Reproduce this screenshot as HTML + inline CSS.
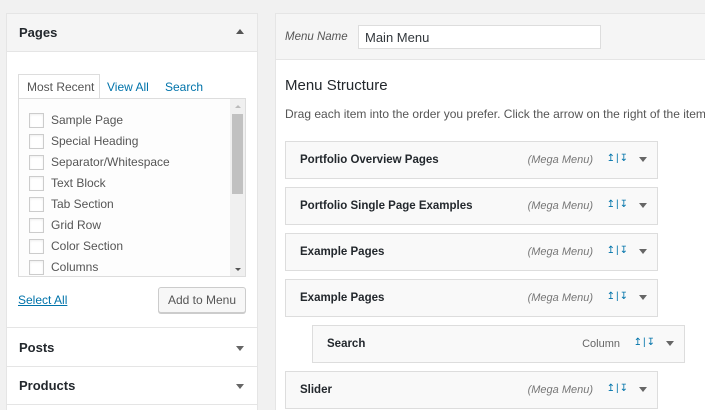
<!DOCTYPE html>
<html><head><style>
*{box-sizing:border-box;margin:0;padding:0}
html,body{width:705px;height:410px;overflow:hidden}
body{background:#f1f1f1;font-family:"Liberation Sans",sans-serif;font-size:13px;color:#444;position:relative}
.abs{position:absolute}
.lp{left:6px;top:13px;width:252px;height:397px;background:#fff;border:1px solid #e5e5e5;border-bottom:none}
.hdr{left:0;top:0;width:250px;height:38px;background:#f5f5f5;border-bottom:1px solid #e5e5e5}
.ttl{font-weight:bold;font-size:13px;color:#23282d}
.tri-u{width:0;height:0;border-left:4px solid transparent;border-right:4px solid transparent;border-bottom:5px solid #555}
.tri-d{width:0;height:0;border-left:4px solid transparent;border-right:4px solid transparent;border-top:5px solid #666}
.cb{width:15px;height:15px;border:1px solid #ccc;background:#fff;box-shadow:inset 0 1px 2px rgba(0,0,0,.07)}
.it{left:285px;width:373px;height:38px;background:#f9f9f9;border:1px solid #ddd}
.it b{position:absolute;left:14px;top:12px;font-size:11.5px;color:#23282d}
.it i{position:absolute;right:64px;top:12px;font-size:11px;color:#777}
.arr{position:absolute;right:28px;top:11px;font-size:10px;color:#0073aa;letter-spacing:1px}
.it .tri-d{position:absolute;right:10px;top:15px}
</style></head><body>
<div class="abs lp">
 <div class="abs hdr"><span class="abs ttl" style="left:12px;top:11px">Pages</span><div class="abs tri-u" style="left:229px;top:15px"></div></div>
 <div class="abs" style="left:11px;top:60px;width:82px;height:25px;border:1px solid #ddd;border-bottom:none;background:#fff"></div>
 <span class="abs" style="left:20px;top:66px;font-size:12px;color:#555">Most Recent</span>
 <span class="abs" style="left:100px;top:66px;font-size:12px;color:#0073aa">View All</span>
 <span class="abs" style="left:158px;top:66px;font-size:12px;color:#0073aa">Search</span>
 <div class="abs" style="left:11px;top:84px;width:228px;height:179px;border:1px solid #ddd;background:#fdfdfd;overflow:hidden">
  <div class="abs" style="right:0;top:0;width:15px;height:177px;background:#f0f0f0"></div>
  <div class="abs" style="right:2px;top:15px;width:11px;height:80px;background:#c1c1c1"></div>
  <div class="abs" style="right:4px;top:6px;width:0;height:0;border-left:3px solid transparent;border-right:3px solid transparent;border-bottom:3px solid #bbb"></div>
  <div class="abs" style="right:4px;top:169px;width:0;height:0;border-left:3px solid transparent;border-right:3px solid transparent;border-top:3px solid #555"></div>
 </div>
 <div class="abs" style="left:22px;top:96px;line-height:21px;font-size:12px;color:#555">
  <div style="display:flex;align-items:center;gap:7px"><span class="cb"></span>Sample Page</div>
  <div style="display:flex;align-items:center;gap:7px"><span class="cb"></span>Special Heading</div>
  <div style="display:flex;align-items:center;gap:7px"><span class="cb"></span>Separator/Whitespace</div>
  <div style="display:flex;align-items:center;gap:7px"><span class="cb"></span>Text Block</div>
  <div style="display:flex;align-items:center;gap:7px"><span class="cb"></span>Tab Section</div>
  <div style="display:flex;align-items:center;gap:7px"><span class="cb"></span>Grid Row</div>
  <div style="display:flex;align-items:center;gap:7px"><span class="cb"></span>Color Section</div>
  <div style="display:flex;align-items:center;gap:7px"><span class="cb"></span>Columns</div>
 </div>
 <span class="abs" style="left:11px;top:279px;font-size:12px;color:#0073aa;text-decoration:underline">Select All</span>
 <div class="abs" style="left:151px;top:273px;width:88px;height:26px;border:1px solid #ccc;border-radius:3px;background:#f7f7f7;box-shadow:0 1px 0 #ccc;font-size:12px;color:#555;text-align:center;line-height:24px">Add to Menu</div>
 <div class="abs" style="left:0;top:313px;width:250px;border-top:1px solid #e5e5e5"></div>
 <span class="abs ttl" style="left:12px;top:326px">Posts</span><div class="abs tri-d" style="left:229px;top:332px"></div>
 <div class="abs" style="left:0;top:352px;width:250px;border-top:1px solid #e5e5e5"></div>
 <span class="abs ttl" style="left:12px;top:364px">Products</span><div class="abs tri-d" style="left:229px;top:370px"></div>
 <div class="abs" style="left:0;top:390px;width:250px;border-top:1px solid #e5e5e5"></div>
</div>
<div class="abs" style="left:275px;top:13px;width:430px;height:397px;background:#fff;border:1px solid #e5e5e5;border-right:none;border-bottom:none;overflow:hidden">
 <div class="abs" style="left:0;top:0;width:430px;height:46px;background:#f5f5f5;border-bottom:1px solid #e5e5e5"></div>
 <span class="abs" style="left:9px;top:17px;font-size:11.5px;font-style:italic;color:#555">Menu Name</span>
 <div class="abs" style="left:82px;top:11px;width:243px;height:24px;border:1px solid #ddd;background:#fff;font-size:13px;color:#32373c;padding:4px 6px">Main Menu</div>
 <span class="abs" style="left:9px;top:63px;font-size:15px;color:#23282d">Menu Structure</span>
 <span class="abs" style="left:9px;top:93px;font-size:12px;color:#555;white-space:nowrap">Drag each item into the order you prefer. Click the arrow on the right of the item to reveal</span>
</div>
<div class="abs it" style="top:141px"><b>Portfolio Overview Pages</b><i>(Mega Menu)</i><span class="arr">↥|↧</span><div class="tri-d"></div></div>
<div class="abs it" style="top:187px"><b>Portfolio Single Page Examples</b><i>(Mega Menu)</i><span class="arr">↥|↧</span><div class="tri-d"></div></div>
<div class="abs it" style="top:233px"><b>Example Pages</b><i>(Mega Menu)</i><span class="arr">↥|↧</span><div class="tri-d"></div></div>
<div class="abs it" style="top:279px"><b>Example Pages</b><i>(Mega Menu)</i><span class="arr">↥|↧</span><div class="tri-d"></div></div>
<div class="abs it" style="top:325px;left:312px"><b>Search</b><i style="font-style:normal;color:#666">Column</i><span class="arr">↥|↧</span><div class="tri-d"></div></div>
<div class="abs it" style="top:371px"><b>Slider</b><i>(Mega Menu)</i><span class="arr">↥|↧</span><div class="tri-d"></div></div>
</body></html>
